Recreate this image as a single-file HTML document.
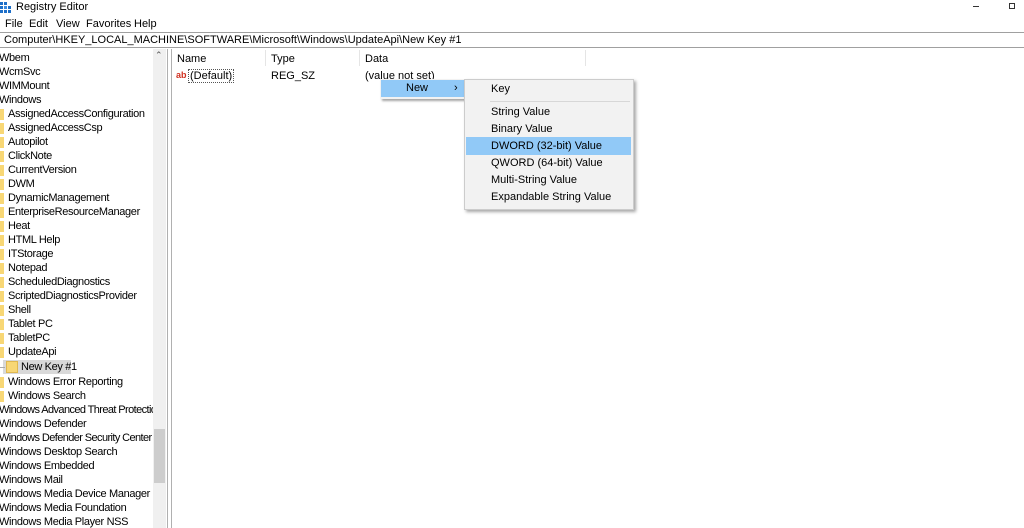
<!DOCTYPE html>
<html><head><style>
*{margin:0;padding:0;box-sizing:border-box}
body{width:1024px;height:528px;overflow:hidden;background:#fff;font-family:"Liberation Sans",sans-serif;font-size:11px;color:#000;position:relative}
.a{position:absolute;white-space:nowrap}
.t{position:absolute;left:0;height:14px;line-height:14px;white-space:nowrap;letter-spacing:-0.35px}
.f{position:absolute;left:-12px;width:8px;height:11px;background:#f8d775;top:2px}
.m{position:absolute;left:0;width:100%;height:17px;line-height:17px}
</style></head><body>
<svg class="a" style="left:0;top:1px" width="12" height="12"><rect x="0" y="1" width="3" height="3" fill="#1e6fc8"/><rect x="4" y="1" width="3" height="3" fill="#1e6fc8"/><rect x="0" y="5" width="3" height="3" fill="#1e6fc8"/><rect x="4" y="5" width="3" height="3" fill="#3a8be0"/><rect x="0" y="9" width="3" height="3" fill="#1e6fc8"/><rect x="4" y="9" width="3" height="3" fill="#1e6fc8"/><rect x="8" y="5" width="3" height="3" fill="#1e6fc8"/><rect x="8" y="9" width="3" height="3" fill="#1e6fc8"/></svg>
<div class="a" style="left:16px;top:1px;font-size:11px">Registry Editor</div>
<div class="a" style="left:973px;top:6px;width:6px;height:1px;background:#333"></div>
<div class="a" style="left:1009px;top:3px;width:6px;height:6px;border:1px solid #333"></div>
<div class="a" style="left:5px;top:18px">File</div>
<div class="a" style="left:29px;top:18px">Edit</div>
<div class="a" style="left:56px;top:18px">View</div>
<div class="a" style="left:86px;top:18px">Favorites</div>
<div class="a" style="left:134px;top:18px">Help</div>
<div class="a" style="left:0;top:32px;width:1024px;height:1px;background:#a0a0a0"></div>
<div class="a" style="left:0;top:47px;width:1024px;height:1px;background:#a0a0a0"></div>
<div class="a" style="left:4px;top:34px">Computer\HKEY_LOCAL_MACHINE\SOFTWARE\Microsoft\Windows\UpdateApi\New Key #1</div>
<div class="a" style="left:153px;top:49px;width:13px;height:479px;background:#f0f0f0"></div>
<div class="a" style="left:154px;top:429px;width:11px;height:54px;background:#cdcdcd"></div>
<div class="a" style="left:155px;top:50px;font-size:9px;color:#555">&#8963;</div>
<div class="a" style="left:167px;top:49px;width:1px;height:479px;background:#b0b0b0"></div>
<div class="a" style="left:171px;top:49px;width:1px;height:479px;background:#b0b0b0"></div>
<div class="a" style="left:0;top:51px;width:153px;height:477px;overflow:hidden">
<div class="t" style="top:0;left:-1px">Wbem</div>
<div class="t" style="top:14px;left:-1px">WcmSvc</div>
<div class="t" style="top:28px;left:-1px">WIMMount</div>
<div class="t" style="top:42px;left:-1px">Windows</div>
<div class="t" style="top:56px;left:8px"><span class="f"></span>AssignedAccessConfiguration</div>
<div class="t" style="top:70px;left:8px"><span class="f"></span>AssignedAccessCsp</div>
<div class="t" style="top:84px;left:8px"><span class="f"></span>Autopilot</div>
<div class="t" style="top:98px;left:8px"><span class="f"></span>ClickNote</div>
<div class="t" style="top:112px;left:8px"><span class="f"></span>CurrentVersion</div>
<div class="t" style="top:126px;left:8px"><span class="f"></span>DWM</div>
<div class="t" style="top:140px;left:8px"><span class="f"></span>DynamicManagement</div>
<div class="t" style="top:154px;left:8px"><span class="f"></span>EnterpriseResourceManager</div>
<div class="t" style="top:168px;left:8px"><span class="f"></span>Heat</div>
<div class="t" style="top:182px;left:8px"><span class="f"></span>HTML Help</div>
<div class="t" style="top:196px;left:8px"><span class="f"></span>ITStorage</div>
<div class="t" style="top:210px;left:8px"><span class="f"></span>Notepad</div>
<div class="t" style="top:224px;left:8px"><span class="f"></span>ScheduledDiagnostics</div>
<div class="t" style="top:238px;left:8px"><span class="f"></span>ScriptedDiagnosticsProvider</div>
<div class="t" style="top:252px;left:8px"><span class="f"></span>Shell</div>
<div class="t" style="top:266px;left:8px"><span class="f"></span>Tablet PC</div>
<div class="t" style="top:280px;left:8px"><span class="f"></span>TabletPC</div>
<div class="t" style="top:294px;left:8px"><span class="f"></span>UpdateApi</div>
<div class="a" style="left:3px;top:309px;width:68px;height:14px;background:#d9d9d9"></div>
<div class="a" style="left:0;top:316px;width:5px;height:1px;background:#aaa"></div>
<div class="a" style="left:6px;top:310px;width:12px;height:12px;background:#f8d775;border:1px solid #e0b850"></div>
<div class="t" style="top:309px;left:21px">New Key #1</div>
<div class="t" style="top:324px;left:8px"><span class="f"></span>Windows Error Reporting</div>
<div class="t" style="top:338px;left:8px"><span class="f"></span>Windows Search</div>
<div class="t" style="top:352px;left:-1px;letter-spacing:-0.6px">Windows Advanced Threat Protection</div>
<div class="t" style="top:366px;left:-1px">Windows Defender</div>
<div class="t" style="top:380px;left:-1px;letter-spacing:-0.6px">Windows Defender Security Center</div>
<div class="t" style="top:394px;left:-1px">Windows Desktop Search</div>
<div class="t" style="top:408px;left:-1px">Windows Embedded</div>
<div class="t" style="top:422px;left:-1px">Windows Mail</div>
<div class="t" style="top:436px;left:-1px">Windows Media Device Manager</div>
<div class="t" style="top:450px;left:-1px">Windows Media Foundation</div>
<div class="t" style="top:464px;left:-1px">Windows Media Player NSS</div>
</div>
<div class="a" style="left:177px;top:53px">Name</div>
<div class="a" style="left:271px;top:53px">Type</div>
<div class="a" style="left:365px;top:53px">Data</div>
<div class="a" style="left:265px;top:50px;width:1px;height:16px;background:#e5e5e5"></div>
<div class="a" style="left:359px;top:50px;width:1px;height:16px;background:#e5e5e5"></div>
<div class="a" style="left:585px;top:50px;width:1px;height:16px;background:#e5e5e5"></div>
<div class="a" style="left:176px;top:70px;font-size:9px;color:#d03020;font-weight:bold">ab</div>
<div class="a" style="left:188px;top:69px;height:14px;padding:0 1px;line-height:12px;border:1px dotted #555">(Default)</div>
<div class="a" style="left:271px;top:70px">REG_SZ</div>
<div class="a" style="left:365px;top:70px">(value not set)</div>
<div class="a" style="left:380px;top:79px;width:86px;height:20px;background:#f2f2f2;box-shadow:2px 2px 2px rgba(0,0,0,.35)"></div>
<div class="a" style="left:381px;top:80px;width:83px;height:17px;background:#91c9f7"></div>
<div class="a" style="left:406px;top:82px">New</div>
<div class="a" style="left:454px;top:82px">&#8250;</div>
<div class="a" style="left:464px;top:79px;width:170px;height:131px;background:#f2f2f2;border:1px solid #ccc;box-shadow:2px 2px 3px rgba(0,0,0,.35)">
<div class="m" style="top:1px;left:26px">Key</div>
<div class="a" style="left:25px;top:21px;width:140px;height:1px;background:#d7d7d7"></div>
<div class="m" style="top:24px;left:26px">String Value</div>
<div class="m" style="top:41px;left:26px">Binary Value</div>
<div class="a" style="left:1px;top:57px;width:165px;height:18px;background:#91c9f7"></div>
<div class="m" style="top:58px;left:26px">DWORD (32-bit) Value</div>
<div class="m" style="top:75px;left:26px">QWORD (64-bit) Value</div>
<div class="m" style="top:92px;left:26px">Multi-String Value</div>
<div class="m" style="top:109px;left:26px">Expandable String Value</div>
</div>
</body></html>
